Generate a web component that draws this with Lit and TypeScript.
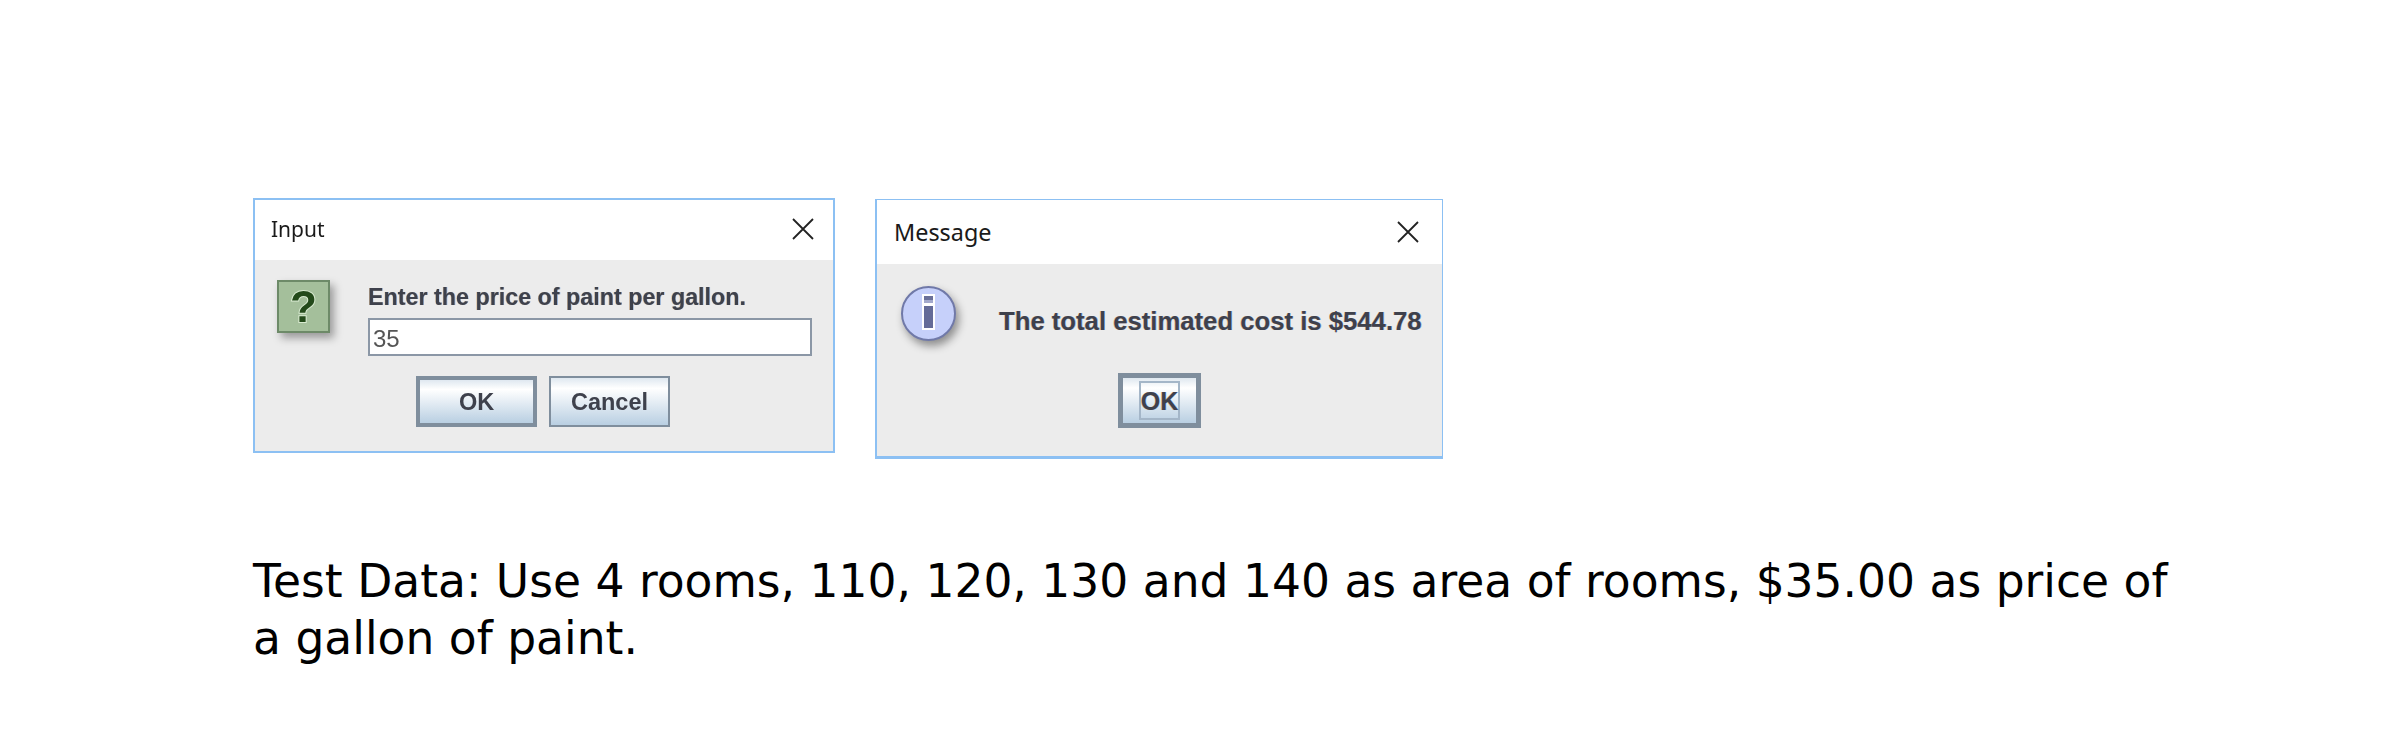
import { LitElement, html, css } from 'lit';
import { customElement } from 'lit/decorators.js';

const closeIcon = html`
  <svg class="close" width="22" height="22" viewBox="0 0 22 22">
    <path d="M1 1 L21 21 M21 1 L1 21" stroke="#222" stroke-width="1.8" fill="none" />
  </svg>
`;

@customElement('app-root')
export class AppRoot extends LitElement {
  static styles = css`
    :host {
      display: block;
      background: #fff;
      height: 756px;
      box-sizing: border-box;
      padding: 198px 200px 0 253px;
      font-family: 'Liberation Sans', Arial, sans-serif;
    }
    .dialogs {
      display: flex;
      align-items: flex-start;
      gap: 40px;
    }
    .dialog {
      box-sizing: border-box;
      border: 2px solid #8cc0f3;
      background: #ececec;
      display: flex;
      flex-direction: column;
    }
    .input-dialog {
      width: 582px;
      height: 255px;
      filter: blur(0.5px);
    }
    .message-dialog {
      width: 568px;
      height: 260px;
      margin-top: 1px;
      border-width: 1px 1px 3px 2px;
    }
    .title {
      background: #fff;
      display: flex;
      align-items: center;
      justify-content: space-between;
      font-family: 'Noto Sans', sans-serif;
      color: #1a1a1a;
    }
    .input-dialog .title {
      height: 60px;
      padding: 0 19px 2px 16px;
      box-sizing: border-box;
      font-size: 21px;
    }
    .message-dialog .title {
      height: 64px;
      padding: 0 23px 1px 17px;
      box-sizing: border-box;
      font-size: 23.4px;
    }
    .body {
      flex: 1;
      display: flex;
      flex-direction: column;
    }
    .input-dialog .body {
      padding: 20px 21px 0 22px;
    }
    .message-dialog .body {
      padding: 22px 0 0 24px;
    }
    .row {
      display: flex;
    }
    .q-icon {
      flex: none;
      display: block;
      filter: drop-shadow(4px 5px 4px rgba(0, 0, 0, 0.35));
    }
    .q-icon text {
      font-family: 'Liberation Sans', Arial, sans-serif;
      font-size: 44px;
      font-weight: bold;
      fill: #234a1a;
      stroke: #d8ead0;
      stroke-width: 2px;
      paint-order: stroke fill;
    }
    .i-icon {
      flex: none;
      display: block;
      filter: drop-shadow(3px 5px 4px rgba(0, 0, 0, 0.4));
    }
    .msg {
      font-weight: bold;
      color: #3e414c;
      text-shadow: -0.6px 0 rgba(205, 140, 60, 0.45), 0.6px 0 rgba(60, 130, 220, 0.45);
      white-space: nowrap;
    }
    .fields {
      margin-left: 38px;
      display: flex;
      flex-direction: column;
    }
    .label {
      height: 38px;
      line-height: 34px;
      font-size: 23.3px;
    }
    .field {
      box-sizing: border-box;
      width: 444px;
      height: 38px;
      background: #fff;
      border: 2px solid #8b97a6;
      padding: 0 3px;
      font-size: 24px;
      line-height: 38px;
      color: #555;
    }
    .buttons {
      display: flex;
      gap: 12px;
      margin: 20px 0 0 139px;
    }
    .btn {
      box-sizing: border-box;
      width: 121px;
      height: 51px;
      padding-top: 2px;
      border: 2px solid #7f8e9d;
      background: linear-gradient(#dfe8f0 0%, #ffffff 22%, #b9cfe2 100%);
      display: flex;
      align-items: center;
      justify-content: center;
      font-size: 23.5px;
      font-weight: bold;
      color: #3e414c;
    }
    .btn.default {
      border-width: 4px;
    }
    .message-dialog .msg {
      margin: 20px 0 0 43px;
      line-height: 30px;
      font-size: 25.7px;
    }
    .message-dialog .btn {
      width: 83px;
      height: 55px;
      padding-top: 0;
      border-width: 5px;
      margin: 32px auto 0 217px;
      font-size: 25px;
    }
    .focus {
      box-sizing: border-box;
      width: 41px;
      height: 39px;
      padding-top: 2px;
      border: 2px solid #a4b6c8;
      display: flex;
      align-items: center;
      justify-content: center;
      text-shadow: -0.6px 0 rgba(205, 140, 60, 0.5), 0.6px 0 rgba(60, 130, 220, 0.5);
    }
    .note {
      margin: 94px 0 0;
      font-family: 'DejaVu Sans', sans-serif;
      font-size: 45.57px;
      line-height: 57px;
      color: #000;
    }
  `;

  render() {
    return html`
      <div class="dialogs">
        <div class="dialog input-dialog">
          <div class="title"><span>Input</span>${closeIcon}</div>
          <div class="body">
            <div class="row">
              <svg class="q-icon" width="53" height="53" viewBox="0 0 53 53">
                <rect x="1" y="1" width="51" height="51" fill="#a4bf9b" stroke="#6d8a68" stroke-width="2" />
                <text x="26.5" y="42" text-anchor="middle">?</text>
              </svg>
              <div class="fields">
                <div class="msg label">Enter the price of paint per gallon.</div>
                <div class="field">35</div>
              </div>
            </div>
            <div class="buttons">
              <div class="btn default">OK</div>
              <div class="btn">Cancel</div>
            </div>
          </div>
        </div>
        <div class="dialog message-dialog">
          <div class="title"><span>Message</span>${closeIcon}</div>
          <div class="body">
            <div class="row">
              <svg class="i-icon" width="55" height="55" viewBox="0 0 55 55">
                <circle cx="27.5" cy="27.5" r="26.5" fill="#c6d0fa" stroke="#7079a8" stroke-width="2" />
                <rect x="21" y="8" width="13" height="36" fill="#fff" />
                <rect x="23" y="10" width="9" height="4" fill="#6a7099" />
                <rect x="23" y="14" width="9" height="3" fill="#a3a9cc" />
                <rect x="23" y="20" width="9" height="22" fill="#646b98" />
              </svg>
              <div class="msg">The total estimated cost is $544.78</div>
            </div>
            <div class="btn default"><div class="focus">OK</div></div>
          </div>
        </div>
      </div>
      <p class="note">Test Data: Use 4 rooms, 110, 120, 130 and 140 as area of rooms, $35.00 as price of a gallon of paint.</p>
    `;
  }
}
